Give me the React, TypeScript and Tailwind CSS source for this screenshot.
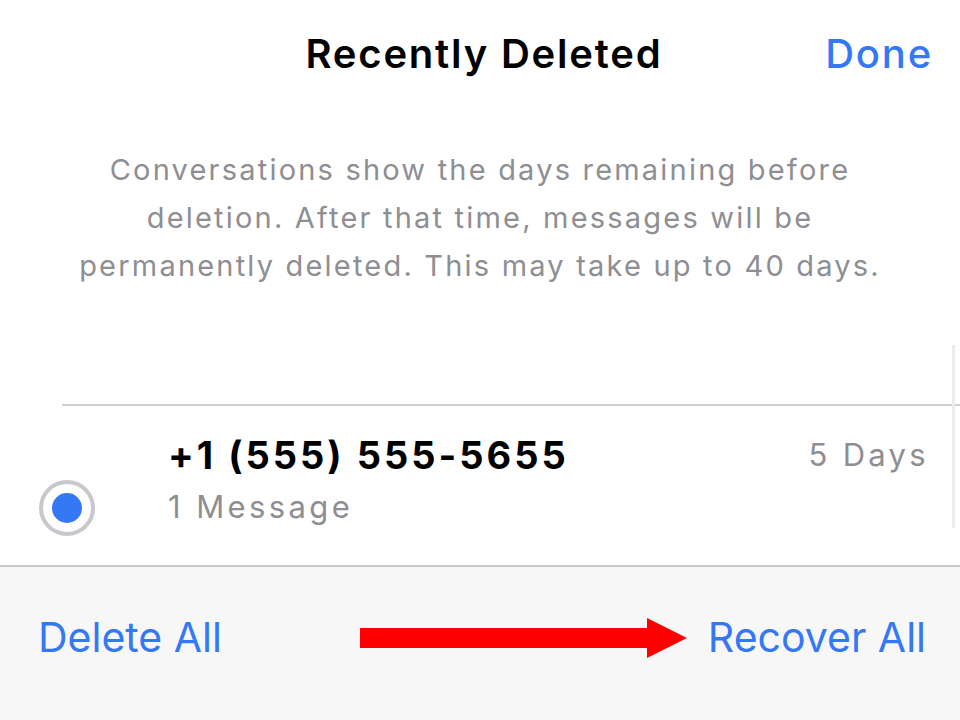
export default function App() {
  return (
    <div
      className="w-[960px] h-[720px] bg-white flex flex-col overflow-hidden relative"
      style={{ fontFamily: "Inter, 'Noto Sans', sans-serif" }}
    >
      {/* nav bar */}
      <div className="h-[110px] shrink-0 grid grid-cols-[1fr_auto_1fr] items-center pb-[2px]">
        <div />
        <div className="text-[40px] font-semibold text-black tracking-[1.8px] pl-[8px]">Recently Deleted</div>
        <div className="flex justify-end pr-[27px]">
          <span className="text-[40px] font-medium text-[#3478f6] tracking-[1.8px]">Done</span>
        </div>
      </div>

      {/* explanation */}
      <div className="pt-[36px] text-center text-[29px] leading-[48px] text-[#8e8e93] tracking-[2.2px]">
        <p>Conversations show the days remaining before</p>
        <p>deletion. After that time, messages will be</p>
        <p>permanently deleted. This may take up to 40 days.</p>
      </div>

      {/* list */}
      <div className="relative flex-1 flex flex-col pt-[114px]">
        <div className="absolute right-[5px] top-[55px] h-[183px] w-[3px] bg-[#ececec]" />
        <div className="ml-[62px] h-[2px] bg-[#cfcfd1]" />
        <div className="flex-1 flex">
          <div className="w-[168px] shrink-0 flex items-start pt-[74px] pl-[39px]">
            <div className="w-[56px] h-[56px] rounded-full border-[4px] border-[#c7c7cc] flex items-center justify-center">
              <div className="w-[30px] h-[30px] rounded-full bg-[#3478f6]" />
            </div>
          </div>
          <div className="flex-1 flex flex-col pt-[23px] pr-[31px]">
            <div className="flex items-center justify-between">
              <span className="text-[38px] font-bold text-black leading-[52px] tracking-[3px]">+1 (555) 555-5655</span>
              <span className="text-[31px] text-[#8e8e93] leading-[52px] tracking-[3.3px]">5 Days</span>
            </div>
            <span className="text-[31px] text-[#8e8e93] leading-[52px] tracking-[3.4px]">1 Message</span>
          </div>
        </div>
      </div>

      {/* toolbar */}
      <div className="h-[155px] shrink-0 border-t-2 border-[#c8c8ca] bg-[#f7f7f7] flex items-center justify-between pl-[38px] pr-[34px] pb-[12px]">
        <span className="text-[41px] text-[#3478f6]">Delete All</span>
        <div className="flex items-center gap-[20px]">
          <svg width="328" height="42" viewBox="0 0 328 42" className="block">
            <polygon points="0,11 287,11 287,1 327,21 287,41 287,31 0,31" fill="#ff0000" />
          </svg>
          <span className="text-[41px] text-[#3478f6]">Recover All</span>
        </div>
      </div>
    </div>
  );
}
